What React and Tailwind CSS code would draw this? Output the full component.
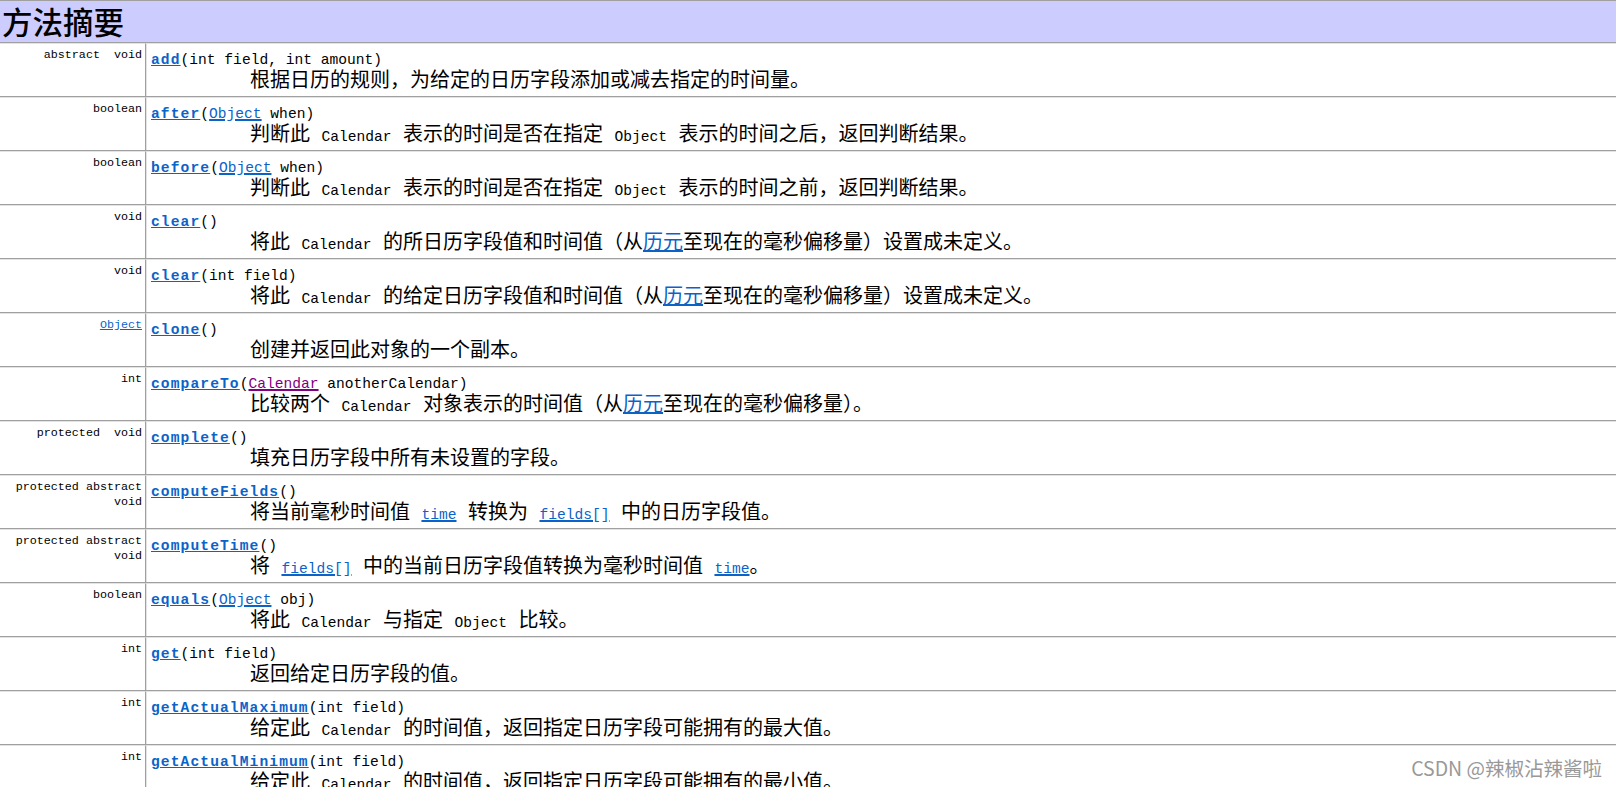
import React from 'react';

const MONO = "font-['Liberation_Mono','DejaVu_Sans_Mono',monospace]";

// 把一段文字拆成 ASCII（等宽，小一号）和中文（CJK 字体）两部分
// 描述行里和中文相邻的空格比等宽空格宽一些，用 wide 处理
const Mixed = ({ text, wide }) => {
  const parts = text.split(wide ? /( +|[\x21-\x7f]+)/ : /([\x00-\x7f]+)/);
  return parts.map((p, i) => {
    if (!p) return null;
    if (wide && /^ +$/.test(p)) {
      return (
        <span key={i} className={`${MONO} text-[14.6px] tracking-[2.7px] whitespace-pre`}>
          {p}
        </span>
      );
    }
    if (/^[\x00-\x7f]+$/.test(p)) {
      return (
        <span key={i} className={`${MONO} text-[14.6px] whitespace-pre`}>
          {p}
        </span>
      );
    }
    return <span key={i}>{p}</span>;
  });
};

const Link = ({ children, visited }) => (
  <span className={`underline ${visited ? 'text-[#800080]' : 'text-[#0b63c8]'}`}>
    <Mixed text={children} />
  </span>
);

const methods = [
  {
    type: ['abstract\u00a0 void'],
    name: 'add',
    args: ['(int field, int amount)'],
    desc: ['根据日历的规则，为给定的日历字段添加或减去指定的时间量。'],
  },
  {
    type: ['boolean'],
    name: 'after',
    args: ['(', { a: 'Object' }, ' when)'],
    desc: ['判断此 Calendar 表示的时间是否在指定 Object 表示的时间之后，返回判断结果。'],
  },
  {
    type: ['boolean'],
    name: 'before',
    args: ['(', { a: 'Object' }, ' when)'],
    desc: ['判断此 Calendar 表示的时间是否在指定 Object 表示的时间之前，返回判断结果。'],
  },
  {
    type: ['void'],
    name: 'clear',
    args: ['()'],
    desc: ['将此 Calendar 的所日历字段值和时间值（从', { a: '历元' }, '至现在的毫秒偏移量）设置成未定义。'],
  },
  {
    type: ['void'],
    name: 'clear',
    args: ['(int field)'],
    desc: ['将此 Calendar 的给定日历字段值和时间值（从', { a: '历元' }, '至现在的毫秒偏移量）设置成未定义。'],
  },
  {
    type: [{ a: 'Object' }],
    name: 'clone',
    args: ['()'],
    desc: ['创建并返回此对象的一个副本。'],
  },
  {
    type: ['int'],
    name: 'compareTo',
    args: ['(', { a: 'Calendar', visited: true }, ' anotherCalendar)'],
    desc: ['比较两个 Calendar 对象表示的时间值（从', { a: '历元' }, '至现在的毫秒偏移量）。'],
  },
  {
    type: ['protected\u00a0 void'],
    name: 'complete',
    args: ['()'],
    desc: ['填充日历字段中所有未设置的字段。'],
  },
  {
    type: ['protected abstract', 'void'],
    name: 'computeFields',
    args: ['()'],
    desc: ['将当前毫秒时间值 ', { a: 'time' }, ' 转换为 ', { a: 'fields[]' }, ' 中的日历字段值。'],
  },
  {
    type: ['protected abstract', 'void'],
    name: 'computeTime',
    args: ['()'],
    desc: ['将 ', { a: 'fields[]' }, ' 中的当前日历字段值转换为毫秒时间值 ', { a: 'time' }, '。'],
  },
  {
    type: ['boolean'],
    name: 'equals',
    args: ['(', { a: 'Object' }, ' obj)'],
    desc: ['将此 Calendar 与指定 Object 比较。'],
  },
  {
    type: ['int'],
    name: 'get',
    args: ['(int field)'],
    desc: ['返回给定日历字段的值。'],
  },
  {
    type: ['int'],
    name: 'getActualMaximum',
    args: ['(int field)'],
    desc: ['给定此 Calendar 的时间值，返回指定日历字段可能拥有的最大值。'],
  },
  {
    type: ['int'],
    name: 'getActualMinimum',
    args: ['(int field)'],
    desc: ['给定此 Calendar 的时间值，返回指定日历字段可能拥有的最小值。'],
  },
];

const Segs = ({ items, wide }) =>
  items.map((s, i) =>
    typeof s === 'string' ? (
      <Mixed key={i} text={s} wide={wide} />
    ) : (
      <Link key={i} visited={s.visited}>
        {s.a}
      </Link>
    )
  );

const Row = ({ m }) => (
  <div className="flex border-t border-[#a0a0a0]">
    <div className="w-[146px] shrink-0 border-t border-t-[#e3e3e3] border-r border-r-[#a0a0a0] pt-[4px] pr-[3px] text-right">
      {m.type.map((t, i) => (
        <div key={i} className={`${MONO} text-[11.7px] leading-[15px] h-[15px] text-black whitespace-pre`}>
          {typeof t === 'string' ? t : <span className="underline text-[#0b63c8]">{t.a}</span>}
        </div>
      ))}
    </div>
    <div className="flex-1 border-t border-t-[#e3e3e3] border-l border-l-[#e3e3e3] pl-[4px] pt-[1px] pb-[6px] font-['Noto_Sans_CJK_SC',sans-serif] text-[20px] text-black whitespace-nowrap">
      <div className="h-[23px] leading-[21px]">
        <span className={`${MONO} text-[14.6px] font-bold tracking-[1.1px] underline text-[#0b63c8]`}>{m.name}</span>
        <Segs items={m.args} />
      </div>
      <div className="h-[22px] leading-[22px] pl-[99px]">
        <Segs items={m.desc} wide />
      </div>
    </div>
  </div>
);

export default function App() {
  return (
    <div className="relative h-[787px] w-full overflow-hidden bg-white">
      <div className="border-t border-[#a0a0a0] bg-[#ccccff] h-[42px]">
        <div className="pl-[2px] font-['Noto_Sans_CJK_SC',sans-serif] text-[30.5px] font-medium leading-[40px] text-black">
          方法摘要
        </div>
      </div>
      {methods.map((m, i) => (
        <Row key={i} m={m} />
      ))}
      <div className="absolute right-[14px] bottom-[7px] font-['Noto_Sans_CJK_SC',sans-serif] text-[19.5px] leading-[24px] text-[#999999]">
        CSDN @辣椒沾辣酱啦
      </div>
    </div>
  );
}
